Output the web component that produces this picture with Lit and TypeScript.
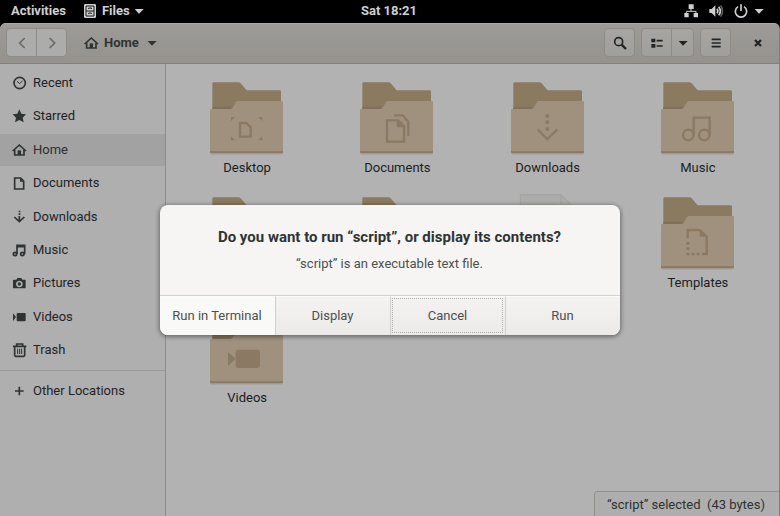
import { LitElement, html, svg, css } from "lit";
import { customElement, property } from "lit/decorators.js";
import { classMap } from "lit/directives/class-map.js";

// Small symbolic icons, drawn on a 48-unit square.
const symbols: Record<string, unknown> = {
  recent: svg`<circle cx="26" cy="24" r="17" class="s"/><path class="t" d="M18 19l8 7 9-9"/>`,
  starred: svg`<path class="f" d="M25 4l6 13 14 2-10 10 3 14-13-7-13 7 3-14L5 19l14-2z"/>`,
  home: svg`<path class="s" d="M5 27L25 9l20 18"/><path class="s" d="M11 23v16h28V23"/><path class="f" d="M20 39V28q0-3 3-3h4q3 0 3 3v11z"/>`,
  documents: svg`<path class="s" d="M11 9h18l9 9v24H11z"/><path class="f" d="M27 9v11h11z"/>`,
  downloads: svg`<path class="f" d="M23 5h5v5h-5zM23 13h5v5h-5z"/><path class="s" d="M25 21v15M10 24l15 14 15-14"/>`,
  music: svg`<circle cx="12" cy="36" r="5" class="s"/><circle cx="34" cy="36" r="5" class="s"/><path class="s" d="M18 36V10h23v26M18 14h23"/>`,
  pictures: svg`<path class="f" fill-rule="evenodd" d="M8 14h8l3-5h12l3 5h8q2 0 2 2v22q0 2-2 2H8q-2 0-2-2V16q0-2 2-2zM25 17a10 10 0 1 0 .1 0z"/><circle cx="25" cy="27" r="5" class="f"/>`,
  videos: svg`<path class="f" d="M20 12h21q3 0 3 3v19q0 3-3 3H20q-3 0-3-3V15q0-3 3-3zM6 13l9 11-9 12z"/>`,
  trash: svg`<path class="s" d="M6 13h40M17 12V6h18v6M11 13v27q0 3 3 3h24q3 0 3-3V13"/><path class="t" d="M20 20v16M26 20v16M32 20v16"/>`,
  plus: svg`<path class="s" d="M25 11v26M12 24h26"/>`,
  back: svg`<path class="s" d="M32 9L17 24l15 15"/>`,
  forward: svg`<path class="s" d="M17 9l15 15-15 15"/>`,
  search: svg`<circle cx="20" cy="20" r="12" class="s"/><path class="w" d="M29 29l13 13"/>`,
  list: svg`<path class="f" d="M7 11h12v11H7zM7 27h12v11H7z"/><path class="s" d="M23 17h18M23 33h18"/>`,
  menu: svg`<path class="s" d="M11 13h27M11 24h27M11 35h27"/>`,
  close: svg`<path class="w" d="M15 15l18 18M33 15L15 33"/>`,
  caret: svg`<path class="f" d="M11 18h27L24 32z"/>`,
  cabinet: svg`<rect x="6" y="3" width="36" height="42" rx="4" class="f"/><path class="k" d="M12 9h24v30H12zM12 24h24M20 18v-3h8v3M20 33v-3h8v3"/>`,
  network: svg`<path class="f" d="M17 4h15v14H17zM4 30h13v13H4zM32 30h13v13H32z"/><path class="t" d="M24 18v7M10 31v-6h29v6"/>`,
  volume: svg`<path class="f" d="M4 18h7L22 7v34L11 30H4z"/><path class="s" d="M27 17q5 7 0 14"/><path class="s" d="M32 11q10 13 0 26"/><path class="s dim" d="M38 7q11 17 0 34"/>`,
  power: svg`<path class="s" d="M15 11a17 17 0 1 0 18 0M24 4v20"/>`,
};

// Emblems pressed into the front of each folder.
const emblems: Record<string, unknown> = {
  none: svg``,
  desktop: svg`<path class="g" d="M135 159h19l13 13v28h-32z"/><path class="gf" d="M108 141h12l-12 12zM202 141h-12l12 12zM108 211h12l-12-12zM202 211h-12l12-12z"/>`,
  documents: svg`<path class="g" d="M126 151h34l17 17v47h-51z"/><path class="gf" d="M155 151v21h22z"/><path class="g" d="M147 136h26l17 19v43"/>`,
  downloads: svg`<circle class="gf" cx="154" cy="138" r="6"/><circle class="gf" cx="154" cy="157" r="6"/><circle class="gf" cx="154" cy="177" r="6"/><path class="g" d="M125 178l29 29 30-29"/>`,
  music: svg`<circle class="g" cx="127" cy="195" r="16"/><circle class="g" cx="175" cy="195" r="16"/><path class="g" d="M143 195v-52h48v52"/>`,
  templates: svg`<path class="g" d="M125 160v-25h35l22 19v53h-14"/><path class="gf" d="M161 135v20h22zM121 171h9v8h-9zM121 187h9v8h-9zM121 203h9v8h-9zM137 203h9v8h-9zM152 203h9v8h-9z"/>`,
  videos: svg`<rect class="gf" x="122" y="149" width="73" height="55" rx="8"/><path class="gf" d="M99 156l23 20-23 22z"/>`,
};

@customElement("sym-icon")
export class SymIcon extends LitElement {
  @property() name = "home";
  static styles = css`
    :host { display: inline-flex; flex: none; width: 16px; height: 16px; }
    svg { width: 100%; height: 100%; }
    .f { fill: currentColor; }
    .s, .t, .w, .k { fill: none; stroke: currentColor; stroke-width: 5; }
    .t { stroke-width: 3; }
    .w { stroke-width: 7; }
    .k { stroke: #1c1c1c; stroke-width: 3; }
    .dim { opacity: 0.45; }
  `;
  render() {
    return html`<svg viewBox="0 0 48 48" aria-hidden="true">${symbols[this.name]}</svg>`;
  }
}

@customElement("file-item")
export class FileItem extends LitElement {
  @property() label = "";
  @property() emblem = "none";
  @property() kind = "folder";
  static styles = css`
    :host { display: block; min-width: 0; }
    a { display: flex; flex-direction: column; align-items: center; gap: 3px; color: #1a1d1e; text-decoration: none; }
    svg { width: 76px; height: 74px; }
    span { line-height: 20px; }
    .back { fill: #8a7a60; }
    .shade { fill: #7f7057; }
    .front { fill: #9f917d; }
    .edge { fill: #8b7963; }
    .shadow { fill: #a3a3a2; }
    .g { fill: none; stroke: #8b7963; stroke-width: 7; }
    .gf { fill: #8b7963; }
    .page { fill: #acacaa; stroke: #9f9f9e; stroke-width: 2; }
    .lines { stroke: #9b9b99; stroke-width: 3; }
  `;
  render() {
    const folder = svg`
      <rect class="shadow" x="46" y="244" width="218" height="10" rx="4"/>
      <path class="back" d="M52 41q0-4 4-4h74q4 0 7 3l18 21h99q4 0 4 4v60H52z"/>
      <path class="shade" d="M52 110h58l-4 8H52z"/>
      <path class="edge" d="M45 200h219v46q0 4-4 4H49q-4 0-4-4z"/>
      <path class="front" d="M45 120q0-3 4-3h58q4 0 6-4l10-17q2-3 6-3h131q4 0 4 4v144q0 3-4 3H49q-4 0-4-3z"/>
      ${emblems[this.emblem]}`;
    const page = svg`<path class="page" d="M73 29h122l38 38v180H73z"/><path class="page" d="M195 29v38h38z"/><path class="lines" d="M93 60h84"/>`;
    return html`<a href="#">
      <svg viewBox="42 33 228 222" overflow="visible" aria-hidden="true">${this.kind === "folder" ? folder : page}</svg>
      <span>${this.label}</span>
    </a>`;
  }
}

@customElement("app-root")
export class AppRoot extends LitElement {
  private places = [
    ["recent", "Recent"], ["starred", "Starred"], ["home", "Home"],
    ["documents", "Documents"], ["downloads", "Downloads"], ["music", "Music"],
    ["pictures", "Pictures"], ["videos", "Videos"], ["trash", "Trash"],
  ];
  private files = [
    ["Desktop", "desktop", "folder"], ["Documents", "documents", "folder"],
    ["Downloads", "downloads", "folder"], ["Music", "music", "folder"],
    ["", "none", "folder"], ["", "none", "folder"],
    ["", "none", "text"], ["Templates", "templates", "folder"],
    ["Videos", "videos", "folder"],
  ];

  static styles = css`
    :host {
      display: flex; flex-direction: column; min-height: 100vh; background: #000;
      font: 13px/20px Roboto, "Noto Sans", sans-serif; color: #1f2324;
    }
    * { box-sizing: border-box; }
    button { font: inherit; color: inherit; margin: 0; padding: 0; border: 0; background: none; }
    .topbar {
      display: grid; grid-template-columns: 1fr auto 1fr; align-items: center;
      height: 23px; padding: 0 13px 2px 11px; color: #cfcfcf; font-weight: 700;
    }
    .topbar button { display: flex; align-items: center; }
    .left { display: flex; gap: 16px; }
    .left .app { gap: 4px; }
    .app sym-icon:last-child { margin-left: -3px; }
    .tray.tray { display: flex; justify-content: flex-end; gap: 9px; justify-self: end; }
    .tray sym-icon:last-child { margin-left: -7px; }
    .window {
      position: relative; flex: 1; display: flex; flex-direction: column;
      border-right: 1px solid #7f7f7e; border-radius: 6px 6px 0 0; overflow: hidden; background: #b2b2b2;
    }
    .header {
      display: flex; align-items: center; height: 41px; padding: 0 13px 2px 6px; gap: 6px;
      background: linear-gradient(#9d9b97, #95928d); border-top: 1px solid #aaa8a5; border-bottom: 1px solid #84807c;
      color: #202425;
    }
    .group { display: flex; height: 29px; border: 1px solid #8e8a85; border-radius: 4px; background: linear-gradient(#a7a5a2, #a19f9b); }
    .group button { display: flex; align-items: center; justify-content: center; width: 29px; }
    .group button + button { border-left: 1px solid #8e8a85; width: 30px; }
    .group .narrow.narrow { width: 22px; }
    .nav { background: #acacab; color: #6b6b6a; margin-right: 10px; }
    .path { display: flex; align-items: center; gap: 5px; font-weight: 700; color: #2f3435; }
    .space { flex: 1; }
    .close { display: flex; margin-left: 13px; }
    .body { flex: 1; display: flex; }
    .sidebar { width: 166px; flex: none; background: #afafaf; border-right: 1px solid #8f8b88; padding-top: 3px; }
    .places { display: flex; flex-direction: column; justify-content: space-between; height: 299px; }
    .place { display: flex; align-items: center; gap: 6px; height: 32px; padding-left: 11px; color: #1f2324; text-decoration: none; }
    .place sym-icon { color: #2f3334; }
    .place.current { background: #a2a2a2; color: #2c3031; }
    .rest { margin-top: 4px; padding-top: 4px; border-top: 1px solid #9d9b99; }
    .files { flex: 1; display: grid; grid-template-columns: repeat(4, 1fr); grid-auto-rows: 115px; align-content: start; padding: 17px 6px 0; }
    .status {
      position: absolute; right: -1px; bottom: 0; height: 25px; padding: 3px 14px 0 12px;
      border: 1px solid #94908c; border-bottom: 0; border-radius: 4px 0 0 0; background: #afaeae; color: #2c3132;
      white-space: pre;
    }
    .overlay { position: absolute; inset: 0; display: grid; place-items: center; }
    .dialog {
      width: 460px; max-width: 100%; border: 0; border-radius: 8px; overflow: hidden;
      background: #f6f5f4; color: #2e3436; text-align: center; box-shadow: 0 1px 4px 1px rgba(0, 0, 0, 0.4);
    }
    .message { padding: 21px 20px 21px; }
    h1 { margin: 0 0 6px; font-size: 15px; line-height: 22px; font-weight: 700; }
    p { margin: 0; color: #4b5052; }
    .actions { display: grid; grid-template-columns: repeat(4, 1fr); border-top: 1px solid #d5d2cf; }
    .actions button { height: 39px; color: #4b5052; background: linear-gradient(#f4f3f2, #ebeae9); border-top: 1px solid #fbfbfa; }
    .actions button + button { border-left: 1px solid #d0cdca; }
    .actions .hover { background: #f9f9f8; }
    .actions .focus { outline: 1px dotted #b0aeac; outline-offset: -3px; }
  `;

  render() {
    return html`
      <header class="topbar">
        <div class="left">
          <button>Activities</button>
          <button class="app"><sym-icon name="cabinet"></sym-icon>Files<sym-icon name="caret"></sym-icon></button>
        </div>
        <button>Sat 18:21</button>
        <button class="tray" aria-label="System menu">
          <sym-icon name="network"></sym-icon><sym-icon name="volume"></sym-icon>
          <sym-icon name="power"></sym-icon><sym-icon name="caret"></sym-icon>
        </button>
      </header>
      <main class="window">
        <div class="header">
          <div class="group nav">
            <button aria-label="Back"><sym-icon name="back"></sym-icon></button>
            <button aria-label="Forward"><sym-icon name="forward"></sym-icon></button>
          </div>
          <button class="path"><sym-icon name="home"></sym-icon>Home<sym-icon name="caret"></sym-icon></button>
          <div class="space"></div>
          <div class="group"><button aria-label="Search"><sym-icon name="search"></sym-icon></button></div>
          <div class="group">
            <button aria-label="List view"><sym-icon name="list"></sym-icon></button>
            <button class="narrow" aria-label="View options"><sym-icon name="caret"></sym-icon></button>
          </div>
          <div class="group"><button aria-label="Menu"><sym-icon name="menu"></sym-icon></button></div>
          <button class="close" aria-label="Close"><sym-icon name="close"></sym-icon></button>
        </div>
        <div class="body">
          <nav class="sidebar">
            <div class="places">
              ${this.places.map(([icon, label]) => html`
                <a href="#" class=${classMap({ place: true, current: icon === "home" })}><sym-icon name=${icon}></sym-icon>${label}</a>`)}
            </div>
            <div class="rest"><a href="#" class="place"><sym-icon name="plus"></sym-icon>Other Locations</a></div>
          </nav>
          <section class="files">
            ${this.files.map(([label, emblem, kind]) => html`<file-item label=${label} emblem=${emblem} kind=${kind}></file-item>`)}
          </section>
        </div>
        <div class="status">“script” selected  (43 bytes)</div>
        <div class="overlay">
          <div class="dialog" role="dialog" aria-labelledby="question">
            <div class="message">
              <h1 id="question">Do you want to run “script”, or display its contents?</h1>
              <p>“script” is an executable text file.</p>
            </div>
            <div class="actions">
              <button class="hover">Run in Terminal</button>
              <button>Display</button>
              <button class="focus">Cancel</button>
              <button>Run</button>
            </div>
          </div>
        </div>
      </main>`;
  }
}
